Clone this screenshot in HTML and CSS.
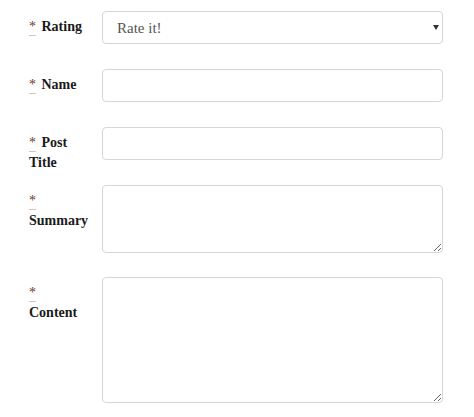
FILE: index.html
```html
<!DOCTYPE html>
<html>
<head>
<meta charset="utf-8">
<link rel="stylesheet" href="styles.css">
</head>
<body>
<form class="review-form">
  <div class="row">
    <label class="label" for="rating"><abbr class="req" title="required">*</abbr> Rating</label>
    <div class="select-wrap">
      <select id="rating" class="field select">
        <option>Rate it!</option>
      </select>
    </div>
  </div>
  <div class="row">
    <label class="label" for="name"><abbr class="req" title="required">*</abbr> Name</label>
    <input id="name" class="field input" type="text">
  </div>
  <div class="row">
    <label class="label" for="title"><abbr class="req" title="required">*</abbr> Post Title</label>
    <input id="title" class="field input" type="text">
  </div>
  <div class="row row-summary">
    <label class="label" for="summary"><abbr class="req" title="required">*</abbr> Summary</label>
    <textarea id="summary" class="field area summary"></textarea>
  </div>
  <div class="row">
    <label class="label" for="content"><abbr class="req" title="required">*</abbr> Content</label>
    <textarea id="content" class="field area content"></textarea>
  </div>
</form>
</body>
</html>
```
FILE: styles.css
```css
html, body {
  margin: 0;
  padding: 0;
  background: #ffffff;
}

body {
  font-family: "Liberation Serif", "Times New Roman", serif;
  color: #1a1a1a;
}

.review-form {
  display: flex;
  flex-direction: column;
  padding: 11px 31px 0 29px;
}

.row {
  display: grid;
  grid-template-columns: 60px 1fr;
  column-gap: 13px;
  align-items: start;
  margin-bottom: 25px;
}

.row-summary {
  margin-bottom: 24px;
}

.label {
  height: 0;
  overflow: visible;
  font-weight: bold;
  font-size: 14px;
  line-height: 20px;
  padding-top: 6px;
  color: #1a1a1a;
}

.req {
  color: #6e3b2d;
  font-weight: normal;
  margin-right: 2px;
  text-decoration: underline;
  text-decoration-color: #d9c4bd;
  text-underline-offset: 4px;
  text-decoration-thickness: 1px;
  cursor: help;
}

.field {
  box-sizing: border-box;
  width: 100%;
  margin: 0;
  border: 1px solid #d6d6d6;
  border-radius: 4px;
  background: #ffffff;
  font-family: "Liberation Serif", "Times New Roman", serif;
  font-size: 15px;
  color: #555555;
  outline: none;
}

.input {
  height: 33px;
  padding: 0 14px;
}

.select-wrap {
  position: relative;
}

.select-wrap::after {
  content: "";
  position: absolute;
  right: 4px;
  top: 14px;
  border-left: 3px solid transparent;
  border-right: 3px solid transparent;
  border-top: 5px solid #333333;
  pointer-events: none;
}

.select {
  -webkit-appearance: none;
  appearance: none;
  height: 33px;
  padding: 0 14px;
}

.area {
  display: block;
  padding: 6px 14px;
  resize: vertical;
}

.summary {
  height: 68px;
}

.content {
  height: 126px;
}
```
